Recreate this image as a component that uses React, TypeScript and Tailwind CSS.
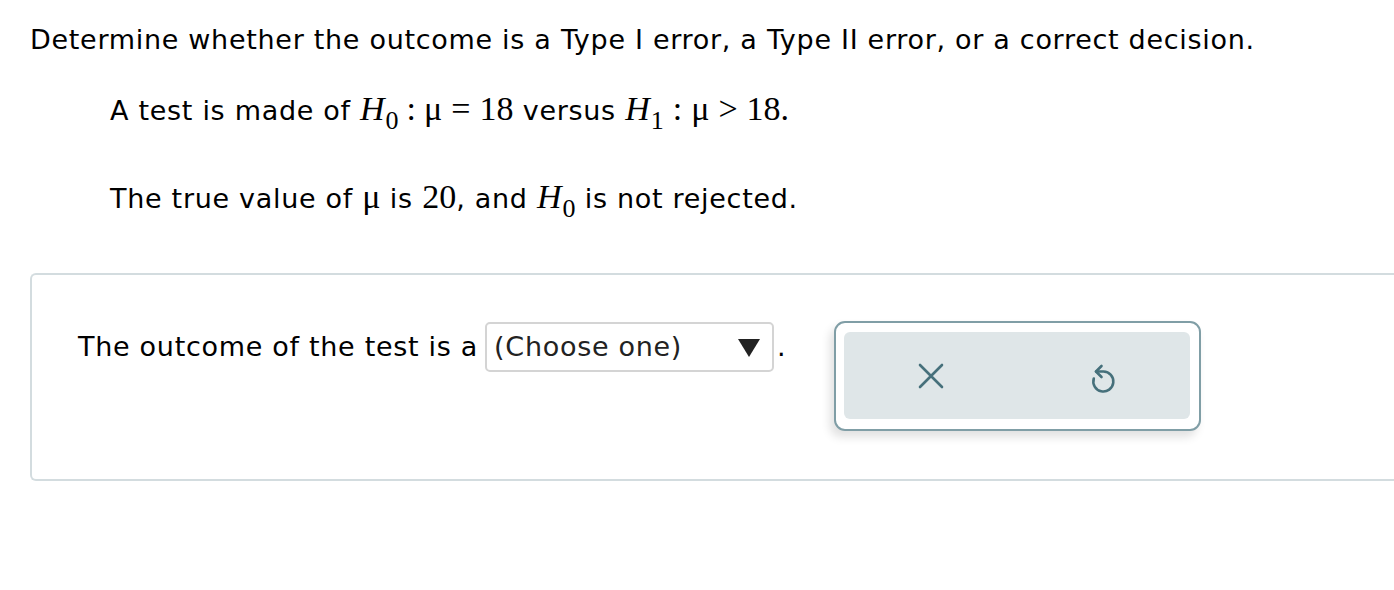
import React from 'react';

const sans = "font-['DejaVu_Sans','Verdana',sans-serif]";
const serif = "font-['Liberation_Serif','Times_New_Roman',serif] text-[34px] tracking-normal";

function Hyp({ sub }: { sub: string }) {
  return (
    <span className={serif}>
      <span className="italic">H</span>
      <span className="text-[26px] relative top-[9px] ml-[1px]">{sub}</span>
    </span>
  );
}

function Mu() {
  return <span className={serif}>μ</span>;
}

export default function App() {
  return (
    <div className={`${sans} text-[27px] tracking-[0.7px] text-black bg-white w-[1394px] h-[590px] overflow-hidden`}>
      <div className="pt-[21px] pl-[30px]">
        <p className="leading-[38px]">Determine whether the outcome is a Type I error, a Type II error, or a correct decision.</p>
        <div className="pl-[80px] pt-[30px]">
          <p className="leading-[40px]">
            A test is made of <Hyp sub="0" />
            <span className={`${serif} mx-[8px]`}>:</span>
            <Mu />
            <span className={`${serif} mx-[9px]`}>=</span>
            <span className={serif}>18</span> versus <Hyp sub="1" />
            <span className={`${serif} mx-[9px]`}>:</span>
            <Mu />
            <span className={`${serif} mx-[9px]`}>&gt;</span>
            <span className={serif}>18.</span>
          </p>
          <p className="leading-[40px] mt-[45px]">
            The true value of <Mu /> is <span className={serif}>20</span>, and <Hyp sub="0" /> is not rejected.
          </p>
        </div>
        <div className="mt-[53px] h-[208px] border-2 border-r-0 border-[#d3dcdf] rounded-l-[6px] flex items-start pl-[46px]">
          <div className="flex items-center mt-[47px]">
            <span>The outcome of the test is a</span>
            <div className="ml-[7px] w-[289px] h-[50px] border-2 border-[#d4d4d4] rounded-[5px] flex items-center justify-between pl-[7px] pr-[11px]">
              <span className="text-[#222]">(Choose one)</span>
              <svg width="24" height="20" viewBox="0 0 24 20">
                <polygon points="1,2 23,2 12,20" fill="#222" />
              </svg>
            </div>
            <span className="ml-[3px]">.</span>
          </div>
          <div className="ml-[48px] mt-[46px] w-[367px] h-[110px] border-2 border-[#809ea6] rounded-[11px] bg-white pt-[9px] pb-[10px] pl-[8px] pr-[9px] shadow-[-4px_6px_10px_rgba(0,0,0,0.12)]">
            <div className="h-full bg-[#dfe6e8] rounded-[6px] flex items-center">
              <div className="flex-1 flex justify-center">
                <svg width="26" height="26" viewBox="0 0 26 26" fill="none" stroke="#46707b" strokeWidth="2.6" strokeLinecap="round">
                  <path d="M2 2 L24 24 M24 2 L2 24" />
                </svg>
              </div>
              <div className="flex-1 flex justify-center">
                <svg width="36" height="40" viewBox="0 0 36 40" className="mt-[1px]" fill="none" stroke="#46707b" strokeWidth="2.6" strokeLinecap="round" strokeLinejoin="round">
                  <path d="M15.5 10 L10 15.5 L15.5 21" />
                  <path d="M10 15.5 H17.5 A10 10 0 1 1 7.8 22.5" />
                </svg>
              </div>
            </div>
          </div>
        </div>
      </div>
    </div>
  );
}
